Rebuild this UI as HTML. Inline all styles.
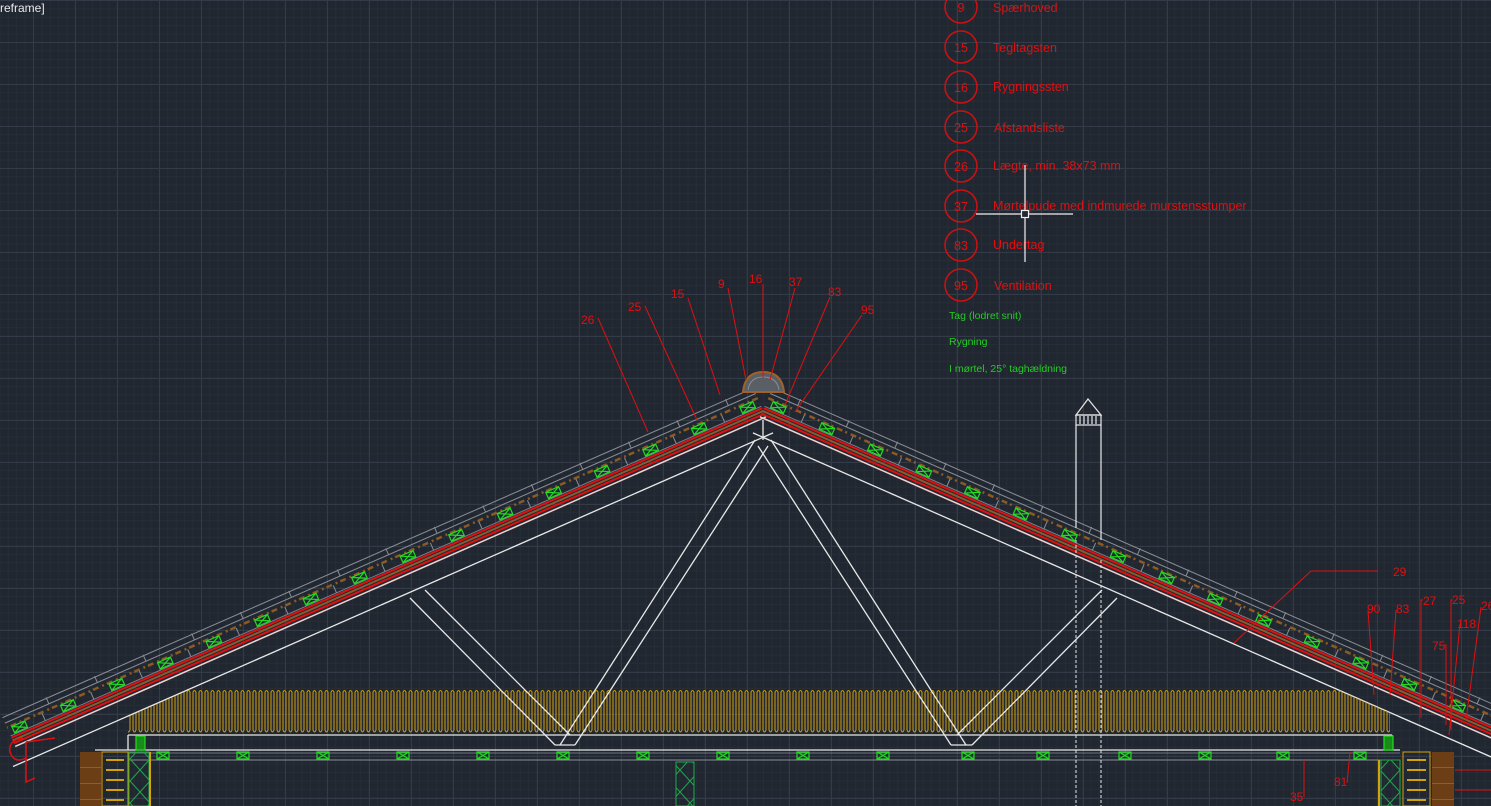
<!DOCTYPE html>
<html><head><meta charset="utf-8"><style>
html,body{margin:0;padding:0;}
body{width:1491px;height:806px;overflow:hidden;background-color:#212731;
background-image:
linear-gradient(to right,#343b48 1px,transparent 1px),
linear-gradient(to bottom,#343b48 1px,transparent 1px),
linear-gradient(to right,#262d37 1px,transparent 1px),
linear-gradient(to bottom,#262d37 1px,transparent 1px);
background-size:42px 42px,42px 42px,8.4px 8.4px,8.4px 8.4px;
background-position:33px 0,0 0,33px 0,0 0;
font-family:"Liberation Sans",sans-serif;}
svg{position:absolute;left:0;top:0;}
.t{font-family:"Liberation Sans",sans-serif;}
</style></head><body>
<svg width="1491" height="806" viewBox="0 0 1491 806">
<defs>
<pattern id="ins" width="6" height="45" patternUnits="userSpaceOnUse" x="0" y="690">
<path d="M1 2V40 M4 2V40 M1 2Q2.5 -1 4 2 M1 40Q2.5 44 4 40" stroke="#d4a20a" stroke-width="1" fill="none"/>
</pattern>
<pattern id="brick" width="20" height="16" patternUnits="userSpaceOnUse">
<rect width="20" height="16" fill="#6b3e16"/><path d="M0 15.5H20" stroke="#9a5a20" stroke-width="1"/>
</pattern>
<pattern id="xx" width="20" height="22" patternUnits="userSpaceOnUse">
<path d="M0 0L20 22M20 0L0 22" stroke="#1fa84a" stroke-width="1"/>
</pattern>
<clipPath id="under"><polygon points="763,437 0,773 0,806 1491,806 1491,757"/></clipPath>
<g id="side">
<path d="M0 24H820 M0 18H820" stroke="#8a8e94" stroke-width="1" fill="none"/>
<path d="M30 18v7M83 18v7M136 18v7M189 18v7M242 18v7M295 18v7M348 18v7M401 18v7M454 18v7M507 18v7M560 18v7M613 18v7M666 18v7M719 18v7M772 18v7" stroke="#8a8e94"/>
<path d="M0 13H820" stroke="#8c5a22" stroke-width="2.5" stroke-dasharray="6 3 2 4"/>
<path d="M0 4H820" stroke="#7c8088" stroke-width="1"/>
<path d="M40 4v8M93 4v8M146 4v8M199 4v8M252 4v8M305 4v8M358 4v8M411 4v8M464 4v8M517 4v8M570 4v8M623 4v8M676 4v8M729 4v8M782 4v8" stroke="#8a8e94"/>
<g stroke="#22dd22" fill="none" stroke-width="1.2">
<path d="M6 5h14v7h-14z M6 5l14 7M20 5l-14 7"/>
<path d="M59 5h14v7h-14z M59 5l14 7M73 5l-14 7"/>
<path d="M112 5h14v7h-14z M112 5l14 7M126 5l-14 7"/>
<path d="M165 5h14v7h-14z M165 5l14 7M179 5l-14 7"/>
<path d="M218 5h14v7h-14z M218 5l14 7M232 5l-14 7"/>
<path d="M271 5h14v7h-14z M271 5l14 7M285 5l-14 7"/>
<path d="M324 5h14v7h-14z M324 5l14 7M338 5l-14 7"/>
<path d="M377 5h14v7h-14z M377 5l14 7M391 5l-14 7"/>
<path d="M430 5h14v7h-14z M430 5l14 7M444 5l-14 7"/>
<path d="M483 5h14v7h-14z M483 5l14 7M497 5l-14 7"/>
<path d="M536 5h14v7h-14z M536 5l14 7M550 5l-14 7"/>
<path d="M589 5h14v7h-14z M589 5l14 7M603 5l-14 7"/>
<path d="M642 5h14v7h-14z M642 5l14 7M656 5l-14 7"/>
<path d="M695 5h14v7h-14z M695 5l14 7M709 5l-14 7"/>
<path d="M748 5h14v7h-14z M748 5l14 7M762 5l-14 7"/>
<path d="M801 5h14v7h-14z M801 5l14 7M815 5l-14 7"/>
</g>
<path d="M0 2H820" stroke="#e01010" stroke-width="2"/>
<path d="M0 -1H820" stroke="#8c5a30" stroke-width="2"/>
<path d="M0 -4H820" stroke="#e01010" stroke-width="2"/>
<path d="M0 -7.5H820" stroke="#f0d0d0" stroke-width="1.5"/>
<path d="M0 -25H830" stroke="#e8e8e8" stroke-width="1.3"/>
</g>
</defs>

<use href="#side" transform="translate(763,410) rotate(156.3)"/>
<use href="#side" transform="translate(763,410) scale(-1,1) rotate(156.3)"/>

<path d="M743 392 Q745 372 763 372 Q782 372 784 392 Z" fill="#5a5f66" stroke="#a0622a" stroke-width="2"/>
<path d="M748 390 Q750 377 763 377 Q777 377 779 390" stroke="#8a8e94" fill="none"/>

<g clip-path="url(#under)">
<rect x="128" y="690" width="1262" height="45" fill="url(#ins)"/>
</g>
<g stroke="#e8e8e8" stroke-width="1.3" fill="none">
<path d="M128 735H1392 M128 735V750 M1392 735V750"/>
<path d="M95 750H1400"/>
<path d="M763 420V440"/>
<path d="M755 440L560 745 M768 446L575 745"/>
<path d="M771 440L966 745 M758 446L951 745"/>
<path d="M410 598L555 745 M425 590L570 735"/>
<path d="M1117 598L972 745 M1102 590L957 735"/>
<path d="M555 745H575 M951 745H972"/>
</g>
<path d="M128 760H1400" stroke="#8a8e94" stroke-width="1"/>
<path d="M128 753H1400" stroke="#8a8e94" stroke-width="0.8"/>
<g stroke="#22dd22" fill="none" stroke-width="1.2">
<path d="M157 752h12v7h-12zM157 752l12 7M169 752l-12 7"/>
<path d="M237 752h12v7h-12zM237 752l12 7M249 752l-12 7"/>
<path d="M317 752h12v7h-12zM317 752l12 7M329 752l-12 7"/>
<path d="M397 752h12v7h-12zM397 752l12 7M409 752l-12 7"/>
<path d="M477 752h12v7h-12zM477 752l12 7M489 752l-12 7"/>
<path d="M557 752h12v7h-12zM557 752l12 7M569 752l-12 7"/>
<path d="M637 752h12v7h-12zM637 752l12 7M649 752l-12 7"/>
<path d="M717 752h12v7h-12zM717 752l12 7M729 752l-12 7"/>
<path d="M797 752h12v7h-12zM797 752l12 7M809 752l-12 7"/>
<path d="M877 752h12v7h-12zM877 752l12 7M889 752l-12 7"/>
<path d="M962 752h12v7h-12zM962 752l12 7M974 752l-12 7"/>
<path d="M1037 752h12v7h-12zM1037 752l12 7M1049 752l-12 7"/>
<path d="M1119 752h12v7h-12zM1119 752l12 7M1131 752l-12 7"/>
<path d="M1199 752h12v7h-12zM1199 752l12 7M1211 752l-12 7"/>
<path d="M1277 752h12v7h-12zM1277 752l12 7M1289 752l-12 7"/>
<path d="M1354 752h12v7h-12zM1354 752l12 7M1366 752l-12 7"/>
<rect x="136" y="736" width="9" height="14" fill="#1a8a1a"/>
<rect x="1384" y="736" width="9" height="14" fill="#1a8a1a"/>
</g>

<rect x="80" y="752" width="21" height="54" fill="url(#brick)"/>
<rect x="102" y="752" width="26" height="54" fill="none" stroke="#d4a20a"/>
<path d="M106 760h18M106 770h18M106 780h18M106 790h18M106 800h18" stroke="#d4a20a" stroke-width="2"/>
<rect x="129" y="752" width="20" height="54" fill="url(#xx)" stroke="#1fa84a"/>
<path d="M150 752V806" stroke="#d4a20a" stroke-width="2"/>
<rect x="676" y="762" width="18" height="44" fill="url(#xx)" stroke="#1fa84a"/>
<rect x="1381" y="760" width="19" height="46" fill="url(#xx)" stroke="#1fa84a"/>
<path d="M1379 760V806" stroke="#d4a20a" stroke-width="2"/>
<rect x="1403" y="752" width="27" height="54" fill="none" stroke="#d4a20a"/>
<path d="M1407 760h19M1407 770h19M1407 780h19M1407 790h19M1407 800h19" stroke="#d4a20a" stroke-width="2"/>
<rect x="1432" y="752" width="22" height="54" fill="url(#brick)"/>
<path d="M1455 770H1491" stroke="#e01010"/>
<path d="M1455 790H1491" stroke="#e01010"/>

<path d="M23 738 Q8 740 10 752 Q14 764 26 758" stroke="#e01010" fill="none" stroke-width="1.5"/>
<path d="M26 742V782L35 778" stroke="#e01010" fill="none" stroke-width="1.5"/>
<path d="M26 742L55 738" stroke="#e01010" stroke-width="1.5"/>

<g stroke="#e8e8e8" fill="none" stroke-width="1.2">
<path d="M1076 415L1088 399L1101 415Z"/>
<rect x="1076" y="415" width="25" height="10"/>
<path d="M1080 416v8M1084 416v8M1088 416v8M1092 416v8M1096 416v8"/>
<path d="M1076 425V528M1101 425V540"/>
<path d="M1076 540V806M1101 560V806" stroke-dasharray="3 2" stroke-width="1"/>
</g>

<g stroke="#e01010" stroke-width="1" fill="none">
<path d="M598 318L648 432"/>
<path d="M645 306L697 420"/>
<path d="M688 298L720 395"/>
<path d="M728 288L746 380"/>
<path d="M763 284V378"/>
<path d="M795 288L770 380"/>
<path d="M830 297L785 405"/>
<path d="M862 315L795 412"/>
<path d="M1378 571H1311L1234 643"/>
<path d="M1368 610L1374 695"/>
<path d="M1396 610L1390 695"/>
<path d="M1423 600H1421V718"/>
<path d="M1453 600H1451V730"/>
<path d="M1460 624L1449 735"/>
<path d="M1444 645H1446V725"/>
<path d="M1481 607L1466 720"/>
<path d="M1350 752L1347 783"/>
<path d="M1304 760V797"/>
</g>
<g class="t" fill="#e01010" font-size="12">
<text x="581" y="324">26</text><text x="628" y="311">25</text><text x="671" y="298">15</text>
<text x="718" y="288">9</text><text x="749" y="283">16</text><text x="789" y="286">37</text>
<text x="828" y="296">83</text><text x="861" y="314">95</text>
<text x="1393" y="576">29</text><text x="1367" y="613">90</text><text x="1396" y="613">83</text>
<text x="1423" y="605">27</text><text x="1452" y="604">25</text><text x="1457" y="628">118</text>
<text x="1432" y="650">75</text><text x="1481" y="610">26</text>
<text x="1334" y="786">81</text><text x="1290" y="801">35</text>
</g>

<g stroke="#d01010" fill="none" stroke-width="1.5">
<circle cx="961" cy="7" r="16"/><circle cx="961" cy="47" r="16"/><circle cx="961" cy="87" r="16"/>
<circle cx="961" cy="127" r="16"/><circle cx="961" cy="166" r="16"/><circle cx="961" cy="206" r="16"/>
<circle cx="961" cy="245" r="16"/><circle cx="961" cy="285" r="16"/>
</g>
<g class="t" fill="#e01010" font-size="12.5">
<text x="961" y="12" text-anchor="middle">9</text><text x="961" y="52" text-anchor="middle">15</text>
<text x="961" y="92" text-anchor="middle">16</text><text x="961" y="132" text-anchor="middle">25</text>
<text x="961" y="171" text-anchor="middle">26</text><text x="961" y="211" text-anchor="middle">37</text>
<text x="961" y="250" text-anchor="middle">83</text><text x="961" y="290" text-anchor="middle">95</text>
<text x="993" y="12">Spærhoved</text><text x="993" y="52">Tegltagsten</text>
<text x="993" y="91">Rygningssten</text><text x="994" y="132">Afstandsliste</text>
<text x="993" y="170">Lægte, min. 38x73 mm</text><text x="993" y="210">Mørtelpude med indmurede murstensstumper</text>
<text x="993" y="249">Undertag</text><text x="994" y="290">Ventilation</text>
</g>
<g class="t" fill="#22cc22" font-size="10.5">
<text x="949" y="319">Tag (lodret snit)</text>
<text x="949" y="345">Rygning</text>
<text x="949" y="372">I mørtel, 25° taghældning</text>
</g>

<g stroke="#f0f0f0" stroke-width="1.2" fill="none">
<path d="M976 214H1021M1029 214H1073M1025 165V210M1025 218V262"/>
<rect x="1021.5" y="210.5" width="7" height="7"/>
</g>

<text class="t" x="0" y="12" fill="#e8e8e8" font-size="12">reframe]</text>
</svg>
</body></html>
